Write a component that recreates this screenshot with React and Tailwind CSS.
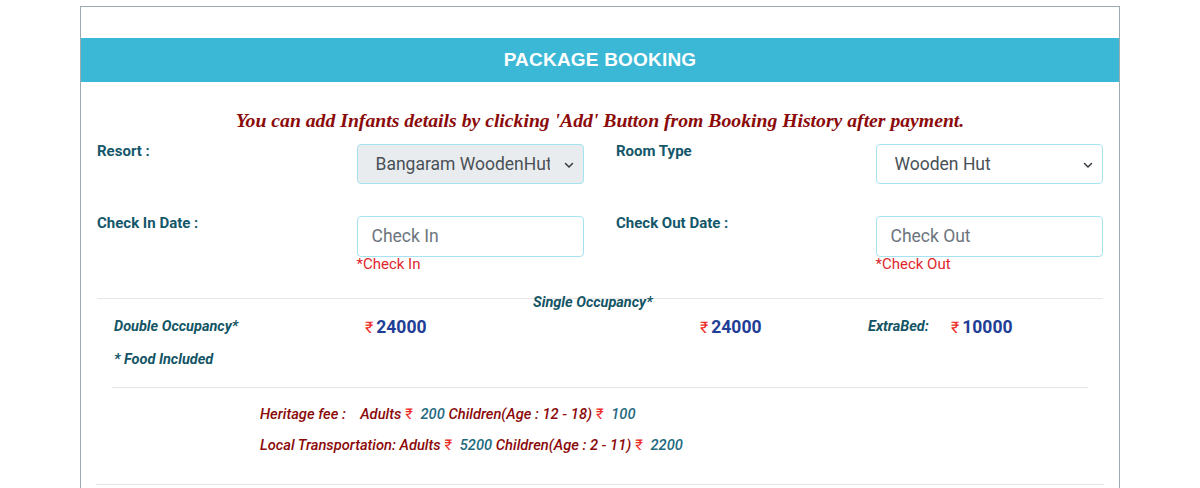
import React from "react";

const ROBOTO = { fontFamily: "Roboto, 'Liberation Sans', sans-serif" };

function Chevron() {
  return (
    <svg width="10" height="7" viewBox="0 0 10 7" className="absolute right-[9px] top-[17px]">
      <path d="M1.5 1.5 L5 5 L8.5 1.5" fill="none" stroke="#343a40" strokeWidth="1.5" strokeLinecap="round" strokeLinejoin="round" />
    </svg>
  );
}

function SelectBox({ value, disabled }) {
  return (
    <div
      className={`relative h-[40px] w-[227px] rounded-[4px] border border-[#a6e3f0] ${disabled ? "bg-[#e9ecef]" : "bg-white"} pl-[18px] flex items-center text-[17.5px] text-[#495057] overflow-hidden whitespace-nowrap`}
    >
      <span className="block w-[174px] overflow-hidden">{value}</span>
      <Chevron />
    </div>
  );
}

function DateBox({ placeholder, note }) {
  return (
    <div>
      <div className="h-[41px] w-[227px] rounded-[4px] border border-[#a6e3f0] bg-white pl-[14px] flex items-center text-[17.5px] text-[#6c757d]">
        {placeholder}
      </div>
      <div className="mt-[-3px] text-[15px] leading-[20px] text-[#e0262b]">{note}</div>
    </div>
  );
}

function Price({ amount }) {
  return (
    <span className="inline-flex items-baseline">
      <span className="text-[16px] text-[#ee2a24] mr-[3px]">₹</span>
      <span className="text-[17.5px] font-bold text-[#1f3e96]">{amount}</span>
    </span>
  );
}

function Rs() {
  return <span className="text-[#ee2a24] not-italic font-normal mx-[4px]">₹</span>;
}

export default function App() {
  return (
    <div className="bg-white w-[1200px] h-[488px] overflow-hidden pt-[6px]" style={ROBOTO}>
      <div className="mx-auto w-[1040px] h-[500px] border border-[#9aacb0] bg-white">
        {/* header */}
        <div className="mt-[31px] h-[44px] bg-[#3bb8d6] flex items-center justify-center">
          <h1 className="text-white font-bold text-[19px] tracking-[0.2px]" style={{ fontFamily: "'Liberation Sans', Arial, sans-serif" }}>
            PACKAGE BOOKING
          </h1>
        </div>

        <p
          className="mt-[26px] text-center text-[19.7px] leading-[24px] font-bold italic text-[#8b0a0a]"
          style={{ fontFamily: "'Liberation Serif', 'Times New Roman', serif" }}
        >
          You can add Infants details by clicking 'Add' Button from Booking History after payment.
        </p>

        {/* row 1 */}
        <div className="mt-[12px] grid grid-cols-4">
          <div className="px-[16px] -mt-[4px] text-[15px] font-bold text-[#14576a]">Resort :</div>
          <div className="px-[16px]"><SelectBox value="Bangaram WoodenHut" disabled /></div>
          <div className="px-[16px] -mt-[4px] text-[15px] font-bold text-[#14576a]">Room Type</div>
          <div className="px-[16px]"><SelectBox value="Wooden Hut" /></div>
        </div>

        {/* row 2 */}
        <div className="mt-[32px] grid grid-cols-4">
          <div className="px-[16px] -mt-[4px] text-[15px] font-bold text-[#14576a]">Check In Date :</div>
          <div className="px-[16px]"><DateBox placeholder="Check In" note="*Check In" /></div>
          <div className="px-[16px] -mt-[4px] text-[15px] font-bold text-[#14576a]">Check Out Date :</div>
          <div className="px-[16px]"><DateBox placeholder="Check Out" note="*Check Out" /></div>
        </div>

        {/* prices */}
        <div className="mx-[16px] mt-[24px] border-t border-[#e6e6e6]">
          <div className="pl-[436px] -mt-[5px] text-[14.5px] italic font-bold text-[#135565] leading-[18px]">
            Single Occupancy*
          </div>
          <div className="mt-[4px] flex items-center pl-[17px] h-[22px]">
            <div className="w-[251px] text-[14.5px] italic font-bold text-[#135565]">Double Occupancy*</div>
            <div className="w-[335px]"><Price amount="24000" /></div>
            <div className="w-[168px]"><Price amount="24000" /></div>
            <div className="w-[83px] text-[14.5px] italic font-bold text-[#135565]">ExtraBed:</div>
            <div><Price amount="10000" /></div>
          </div>
          <div className="mt-[13px] pl-[17px] text-[14.5px] italic font-bold text-[#135565] leading-[18px]">
            * Food Included
          </div>
        </div>

        <div className="mx-[31px] mt-[18px] border-t border-[#e6e6e6]" />

        <div className="pl-[179px] mt-[16px] text-[14.7px] italic font-medium text-[#8b0a0a] leading-[20px]">
          <div>
            Heritage fee :&nbsp;&nbsp;&nbsp; Adults<Rs /><span className="text-[#236a80]">&nbsp;200</span> Children(Age : 12 - 18)<Rs /><span className="text-[#236a80]">&nbsp;100</span>
          </div>
          <div className="mt-[11px]">
            Local Transportation: Adults<Rs /><span className="text-[#236a80]">&nbsp;5200</span> Children(Age : 2 - 11)<Rs /><span className="text-[#236a80]">&nbsp;2200</span>
          </div>
        </div>

        <div className="mx-[15px] mt-[29px] border-t border-[#e6e6e6]" />
      </div>
    </div>
  );
}
